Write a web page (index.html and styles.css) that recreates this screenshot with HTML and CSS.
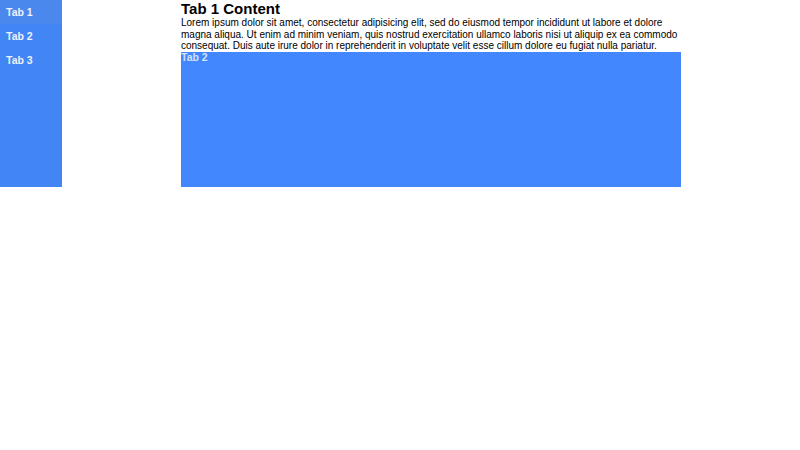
FILE: index.html
```html
<!DOCTYPE html>
<html lang="en">
  <head>
    <meta charset="UTF-8" />
    <meta name="viewport" content="width=device-width, initial-scale=1.0" />
    <title>Tabs</title>
    <link rel="stylesheet" href="styles.css">
  </head>
  <body>
    <div class="tabs">
      <div class="tab-list">
        <button class="tab tab-active">Tab 1</button>
        <button class="tab">Tab 2</button>
        <button class="tab">Tab 3</button>
      </div>
      <div class="tab-panels">
        <div class="panel">
          <h1 class="panel-title">Tab 1 Content</h1>
          <p class="panel-text">Lorem ipsum dolor sit amet, consectetur adipisicing elit, sed do eiusmod tempor incididunt ut labore et dolore magna aliqua. Ut enim ad minim veniam, quis nostrud exercitation ullamco laboris nisi ut aliquip ex ea commodo consequat. Duis aute irure dolor in reprehenderit in voluptate velit esse cillum dolore eu fugiat nulla pariatur.</p>
          <div class="panel-next">Tab 2</div>
        </div>
      </div>
    </div>
  </body>
</html>
```

FILE: styles.css
```css
body {
  margin: 0;
  font-family: "Liberation Sans", Arial, sans-serif;
}
.tabs {
  display: flex;
}
.tab-list {
  width: 62px;
  display: flex;
  flex-direction: column;
  background-color: #4286f5;
}
.tab {
  height: 24px;
  padding: 0 6px;
  text-align: left;
  font-family: inherit;
  font-size: 10.5px;
  font-weight: bold;
  color: #eef2fb;
  background-color: transparent;
  border: none;
}
.tab-active {
  background-color: #4a88ee;
}
.tab-panels {
  flex: 1;
  display: flex;
  justify-content: center;
}
.panel {
  width: 500px;
}
.panel-title {
  margin: 0;
  font-size: 15px;
  line-height: 17px;
}
.panel-text {
  margin: 0;
  font-size: 10px;
  line-height: 11.5px;
}
.panel-next {
  height: 135px;
  font-size: 10.5px;
  font-weight: bold;
  line-height: 11px;
  color: #d3e2fb;
  background-color: #4287fd;
}
```
